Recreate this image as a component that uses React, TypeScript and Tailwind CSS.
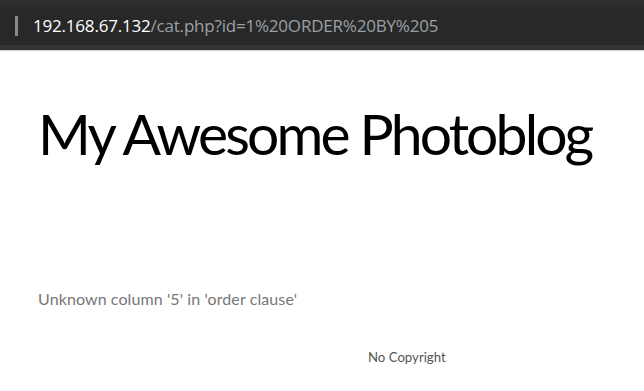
export default function App() {
  return (
    <div className="min-h-[391px] w-full bg-white">
      <div className="h-[51px] w-full bg-[#2d2d2d] pt-[7px]">
        <div className="flex h-[38px] items-center bg-[#282828] pl-[15px]">
          <span className="h-[20px] w-[3px] bg-[#8a8a8a]" />
          <span className="ml-[15px] whitespace-nowrap font-['Segoe_UI','Open_Sans',sans-serif] text-[17px] tracking-[-0.2px] text-[#9aa0a6]">
            <span className="text-white">192.168.67.132</span>/cat.php?id=1%20ORDER%20BY%205
          </span>
        </div>
        <div className="h-[5px] bg-[#353535]" />
        <div className="h-px bg-[#d0d0d0]" />
      </div>

      <div className="px-[38px] font-['Lato',sans-serif]">
        <h1 className="mt-[54px] whitespace-nowrap text-[57px] leading-none tracking-[-2.85px] text-black">
          My Awesome Photoblog
        </h1>
        <p className="mt-[125px] text-[16px] leading-6 tracking-[0.1px] text-[#777]">
          Unknown column '5' in 'order clause'
        </p>
      </div>
      <div className="mt-[37px] pl-[368px] font-['Lato',sans-serif] text-[13.2px] text-[#555]">No Copyright</div>
    </div>
  );
}
